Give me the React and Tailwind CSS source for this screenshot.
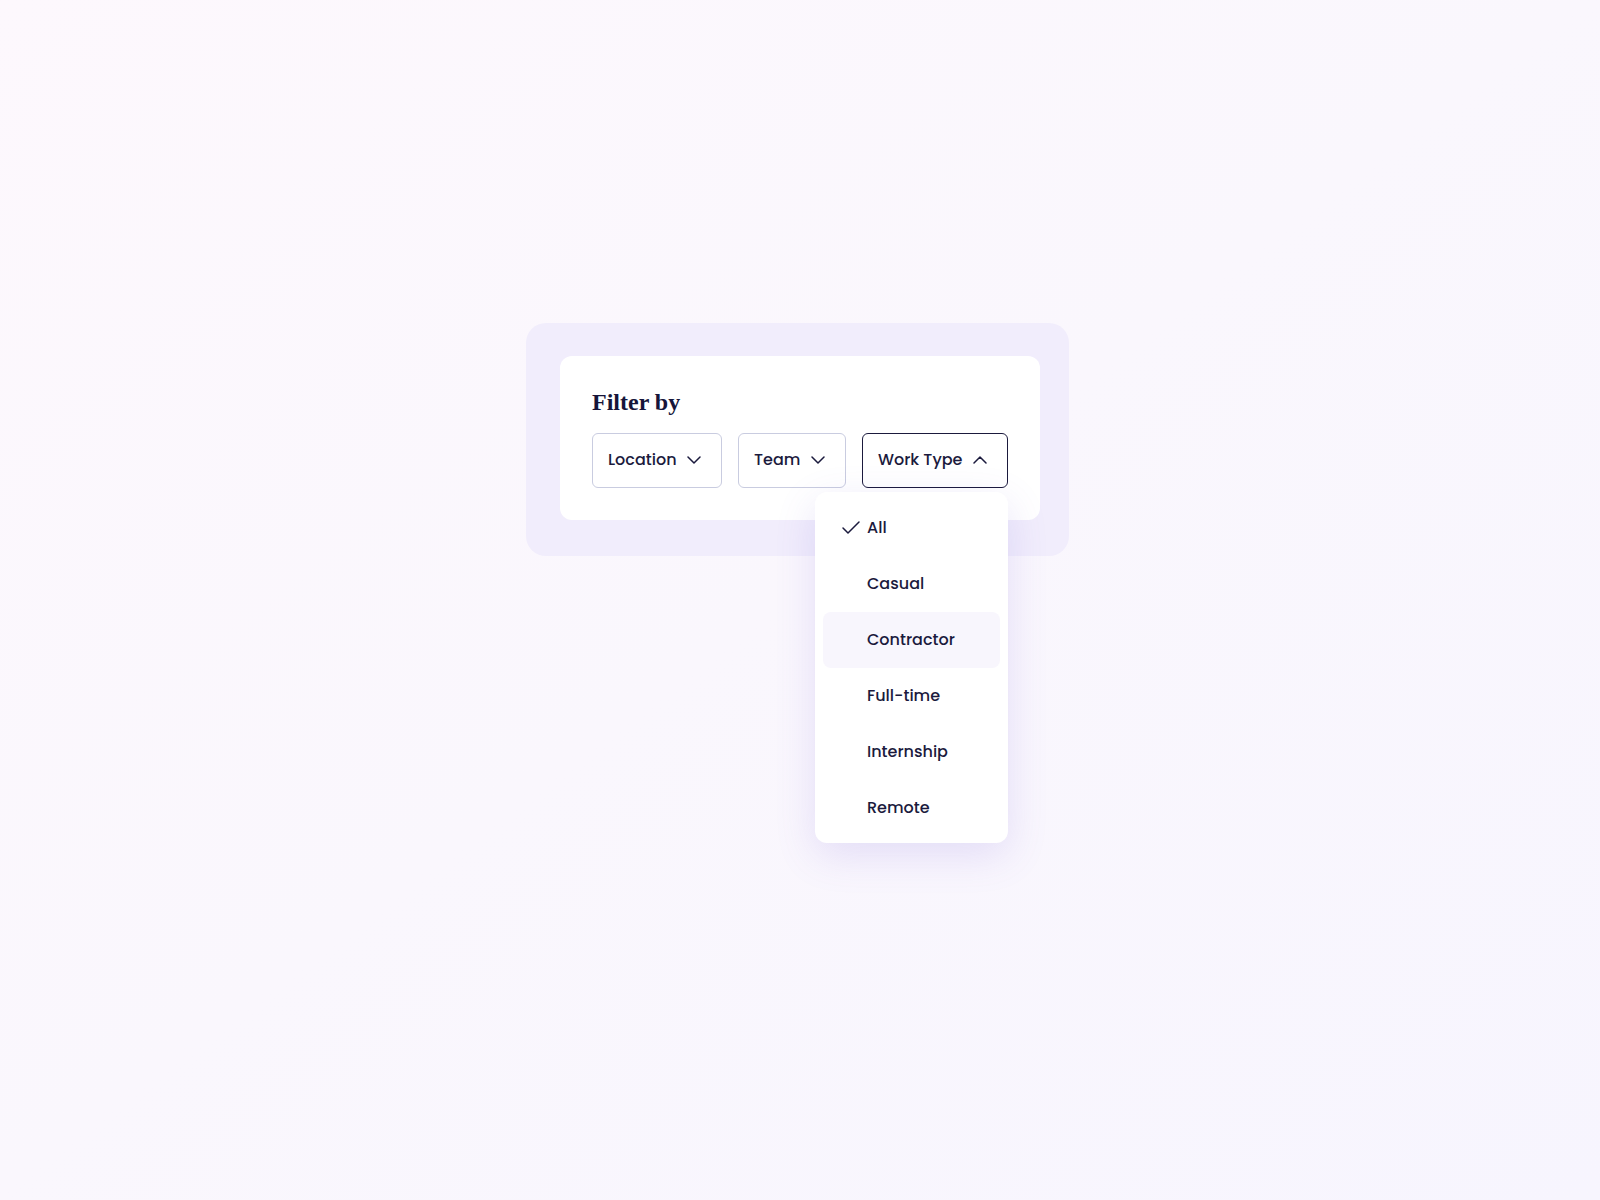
import React from "react";

const Chevron = ({ up }) => (
  <svg width="14" height="8" viewBox="0 0 14 8" fill="none" className="shrink-0">
    <path
      d={up ? "M1 7L7 1L13 7" : "M1 1L7 7L13 1"}
      stroke="#1b1a3d"
      strokeWidth="1.5"
      strokeLinecap="round"
      strokeLinejoin="round"
    />
  </svg>
);

const Check = () => (
  <svg width="24" height="24" viewBox="0 0 24 24" fill="none" className="shrink-0">
    <path d="M20 6 9 17l-5-5" stroke="#1b1a3d" strokeWidth="1.5" strokeLinecap="round" strokeLinejoin="round" />
  </svg>
);

const items = ["All", "Casual", "Contractor", "Full-time", "Internship", "Remote"];

export default function App() {
  const font = { fontFamily: "Poppins, Inter, 'Noto Sans', sans-serif" };
  return (
    <div
      className="min-h-screen w-full bg-linear-to-br from-[#fdf8fd] via-[#faf7fd] to-[#f7f5fe] flex justify-center pt-[323px] text-[#1b1a3d]"
      style={font}
    >
      <div className="self-start rounded-[20px] bg-[#f1edfc] pl-[34px] pr-[29px] pt-[33px] pb-[36px] ml-[-5px]">
        <div className="w-[480px] rounded-[12px] bg-white p-8">
          <h2
            className="text-[24px] leading-[1.2] font-bold text-[#16153a] mb-4"
            style={{ fontFamily: "'Liberation Serif', 'Times New Roman', serif" }}
          >
            Filter by
          </h2>
          <div className="flex gap-4">
            <button className="h-[55px] w-[130px] flex items-center justify-between pl-[15px] pr-[20px] rounded-[6px] border border-[#c9cce0] bg-white text-[16px] font-medium">
              <span>Location</span>
              <Chevron />
            </button>
            <button className="h-[55px] w-[108px] flex items-center justify-between pl-[15px] pr-[20px] rounded-[6px] border border-[#c9cce0] bg-white text-[16px] font-medium">
              <span>Team</span>
              <Chevron />
            </button>
            <div className="relative">
              <button className="h-[55px] w-[146px] flex items-center justify-between pl-[15px] pr-[20px] rounded-[6px] border border-[#1b1a3d] bg-white text-[16px] font-medium">
                <span>Work Type</span>
                <Chevron up />
              </button>
              <div className="absolute right-0 top-full mt-1 w-[193px] rounded-[12px] bg-white px-2 pt-2 pb-[7px] shadow-[0_12px_40px_rgba(110,90,210,0.16)] z-10">
                {items.map((it) => (
                  <div
                    key={it}
                    className={
                      "h-14 flex items-center gap-1 pl-4 rounded-[8px] text-[16px] font-medium " +
                      (it === "Contractor" ? "bg-[#f8f6fd]" : "")
                    }
                  >
                    {it === "All" ? <Check /> : <span className="w-6 shrink-0" />}
                    <span>{it}</span>
                  </div>
                ))}
              </div>
            </div>
          </div>
        </div>
      </div>
    </div>
  );
}
